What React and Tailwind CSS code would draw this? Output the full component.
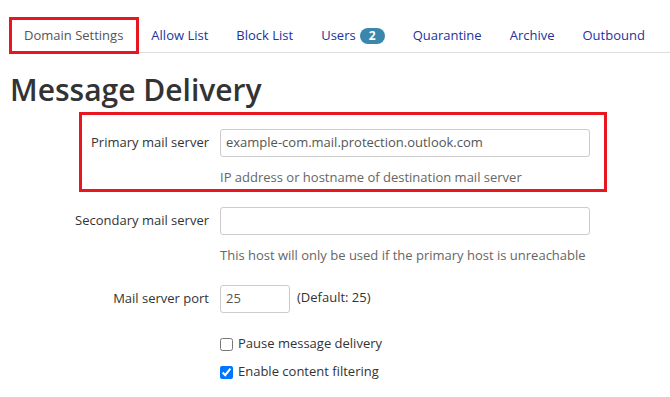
import React from "react";

const font = { fontFamily: '"Open Sans", "Liberation Sans", sans-serif' };

function Tab({ children, active, badge }) {
  return (
    <div
      className={
        "relative flex items-center pt-[2px] text-[13px] " +
        (active
          ? "-mb-px h-[36px] border-x border-t border-[#ddd] bg-white px-[13px] pb-px text-[#555]"
          : "h-[35px] px-[14px] text-[#22339a]")
      }
    >
      <span>{children}</span>
      {badge && (
        <span className="ml-[4px] flex h-[16px] min-w-[25px] items-center justify-center rounded-full bg-[#3a87ad] px-[7px] text-[12px] font-bold text-white">
          {badge}
        </span>
      )}
      {active && (
        <span className="pointer-events-none absolute -left-[2px] -right-[3px] -top-[1px] -bottom-[1px] border-[3px] border-[#e8161f]" />
      )}
    </div>
  );
}

function Row({ label, children, className = "" }) {
  return (
    <div className={"flex items-center " + className}>
      <div className="w-[209px] shrink-0 text-right text-[13px] text-[#333]">
        {label}
      </div>
      <div className="ml-[11px] flex items-center">{children}</div>
    </div>
  );
}

function Help({ children }) {
  return (
    <div className="ml-[220px] mt-[11px] h-[18px] text-[13px] leading-[18px] text-[#666]">
      {children}
    </div>
  );
}

export default function App() {
  return (
    <div style={font} className="h-[397px] w-[670px] overflow-hidden bg-white">
      <div className="ml-[10px] mt-[17px] flex border-b border-[#ddd]">
        <Tab active>Domain Settings</Tab>
        <Tab>Allow List</Tab>
        <Tab>Block List</Tab>
        <Tab badge="2">Users</Tab>
        <Tab>Quarantine</Tab>
        <Tab>Archive</Tab>
        <Tab>Outbound</Tab>
      </div>

      <h1 className="ml-[10px] mt-[19px] h-[35px] text-[30px] font-semibold leading-[35px] text-[#333]">
        Message Delivery
      </h1>

      <div className="relative mt-[22px]">
        <span className="pointer-events-none absolute left-[79px] top-[-17px] h-[80px] w-[528px] border-[3px] border-[#e8161f]" />
        <Row label="Primary mail server">
          <div className="flex h-[28px] w-[370px] items-center rounded-[3px] border border-[#ccc] px-[5px] text-[13px] text-[#555]">
            example-com.mail.protection.outlook.com
          </div>
        </Row>
        <Help>IP address or hostname of destination mail server</Help>
      </div>

      <div className="mt-[21px]">
        <Row label="Secondary mail server">
          <div className="h-[28px] w-[370px] rounded-[3px] border border-[#ccc]" />
        </Row>
        <Help>This host will only be used if the primary host is unreachable</Help>
      </div>

      <div className="mt-[21px]">
        <Row label="Mail server port">
          <div className="flex h-[28px] w-[70px] items-center rounded-[3px] border border-[#ccc] px-[5px] text-[13px] text-[#555]">
            25
          </div>
          <span className="ml-[7px] -mt-[3px] text-[13px] text-[#333]">
            (Default: 25)
          </span>
        </Row>
      </div>

      <div className="ml-[220px] mt-[22px] flex flex-col gap-[10px] text-[13px] text-[#333]">
        <label className="flex h-[18px] items-center">
          <input type="checkbox" className="m-0 h-[13px] w-[13px]" />
          <span className="ml-[5px]">Pause message delivery</span>
        </label>
        <label className="flex h-[18px] items-center">
          <input type="checkbox" defaultChecked className="m-0 h-[13px] w-[13px]" />
          <span className="ml-[5px]">Enable content filtering</span>
        </label>
      </div>
    </div>
  );
}
